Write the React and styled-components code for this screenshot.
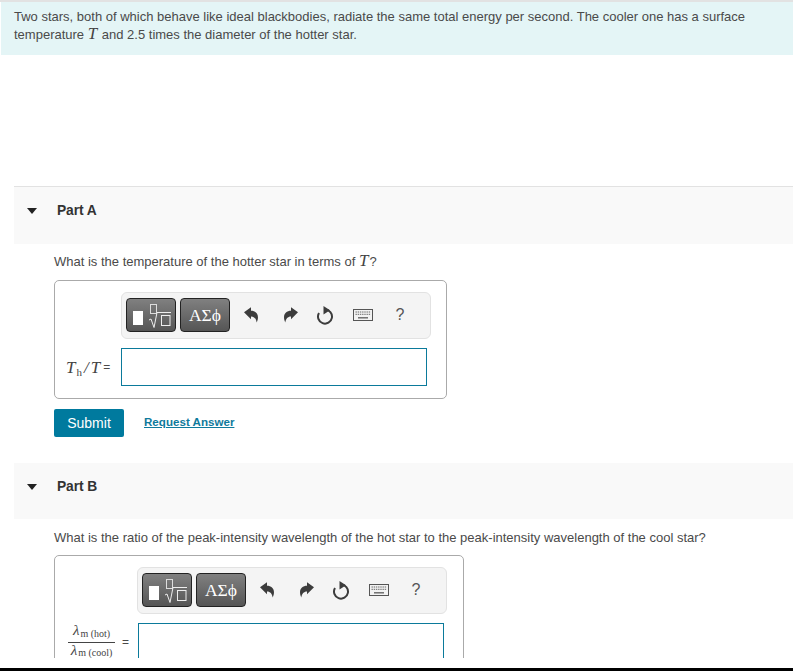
import React from "react";
import styled, { createGlobalStyle } from "styled-components";

const GlobalStyle = createGlobalStyle`
  html, body {
    margin: 0;
    padding: 0;
    background: #fff;
  }
  body {
    font-family: "Liberation Sans", Arial, sans-serif;
    color: #4a4a4a;
  }
`;

const Page = styled.div`
  width: 793px;
  height: 671px;
  display: flex;
  flex-direction: column;
  overflow: hidden;
`;

const Content = styled.div`
  height: 658px;
  flex: none;
  overflow: hidden;
  border-top: 2px solid #e2e2e2;
  box-sizing: border-box;
`;

const BottomBar = styled.div`
  margin-top: auto;
  height: 3px;
  background: #000;
`;

const Intro = styled.div`
  margin-left: 1px;
  height: 53px;
  box-sizing: border-box;
  padding: 7px 13px;
  background: #e4f5f6;
  font-size: 13px;
  line-height: 16px;
  margin-bottom: 131px;
`;

const MathText = styled.span`
  font-family: "Liberation Serif", "Times New Roman", serif;
  font-style: italic;
  font-size: ${(p) => p.$size || "17px"};
  line-height: 1;
  margin-right: ${(p) => p.$after || "1px"};
  color: #444;
`;

const Sub = styled.span`
  font-family: "Liberation Serif", "Times New Roman", serif;
  font-size: ${(p) => p.$size || "11px"};
  font-style: normal;
  margin-left: 1px;
  position: relative;
  top: ${(p) => p.$drop || "3px"};
`;

const Slash = styled.span`
  margin: 0 2px;
`;

const Part = styled.section`
  margin-left: 14px;
  margin-top: ${(p) => p.$top || "0"};
`;

const PartHeader = styled.div`
  height: ${(p) => p.$height};
  box-sizing: border-box;
  padding: ${(p) => p.$pad} 0 0 13px;
  background: #f9f9f9;
  border-top: ${(p) => (p.$line ? "1px solid #e2e2e2" : "none")};
  display: flex;
  align-items: flex-start;
`;

const Caret = styled.span`
  width: 0;
  height: 0;
  margin-top: 6px;
  border-left: 5.5px solid transparent;
  border-right: 5.5px solid transparent;
  border-top: 6px solid #222;
`;

const PartTitle = styled.h3`
  margin: 0 0 0 19px;
  padding-left: 1px;
  font-size: 13.8px;
  letter-spacing: -0.1px;
  line-height: 17px;
  font-weight: bold;
  color: #333;
`;

const PartBody = styled.div`
  padding: ${(p) => p.$top} 0 0 40px;
`;

const Question = styled.p`
  margin: 0 0 ${(p) => p.$gap};
  font-size: 13px;
  line-height: 18px;
`;

const AnswerBox = styled.div`
  width: ${(p) => p.$width};
  box-sizing: border-box;
  padding: 11px 0 12px 11px;
  border: 1px solid #aaa;
  border-radius: 5px;
`;

const Toolbar = styled.div`
  width: 310px;
  height: 47px;
  box-sizing: border-box;
  margin-left: ${(p) => p.$inset};
  padding: 5px 4px;
  display: flex;
  align-items: flex-start;
  background: #f4f4f4;
  border: 1px solid #e2e2e2;
  border-radius: 6px;
`;

const ToolButton = styled.button`
  width: 50px;
  height: 34px;
  margin-right: 4px;
  padding: 0;
  flex: none;
  display: flex;
  align-items: center;
  justify-content: center;
  background: linear-gradient(#808080, #555);
  border: 1px solid #222;
  border-radius: 4px;
  color: #fff;
  font-family: "Liberation Serif", "Times New Roman", serif;
  font-size: 17.5px;
`;

const IconSlot = styled.span`
  width: ${(p) => p.$width};
  height: 34px;
  flex: none;
  display: flex;
  align-items: center;
  justify-content: center;
  color: #3c3c3c;
`;

const Help = styled.span`
  font-size: 16px;
  color: #555;
`;

const AnswerRow = styled.div`
  display: flex;
  align-items: flex-start;
  margin-top: 9px;
`;

const Label = styled.div`
  width: ${(p) => p.$width};
  height: 38px;
  flex: none;
  display: flex;
  align-items: center;
  font-size: 12px;
  white-space: nowrap;
`;

const Equals = styled.span`
  margin-left: ${(p) => p.$gap || "3px"};
  font-size: 12px;
`;

const AnswerInput = styled.input`
  width: 306px;
  height: 38px;
  flex: none;
  box-sizing: border-box;
  border: 1px solid #0b7a9b;
  border-radius: 0;
  background: #fff;
  outline: none;
`;

const Fraction = styled.span`
  display: inline-flex;
  flex-direction: column;
  align-items: center;
  width: 47px;
  margin: 0 0 2px 2px;
`;

const FractionLine = styled.span`
  align-self: stretch;
  height: 1px;
  margin-top: 3px;
  background: #444;
`;

const FractionPart = styled.span`
  height: 16px;
  line-height: 16px;
  white-space: nowrap;
`;

const Actions = styled.div`
  display: flex;
  align-items: center;
  margin-top: 10px;
`;

const Submit = styled.button`
  width: 70px;
  height: 28px;
  padding: 0;
  background: #007a9e;
  border: none;
  border-radius: 2px;
  color: #fff;
  font-family: inherit;
  font-size: 14px;
`;

const RequestLink = styled.a`
  margin: -4px 0 0 20px;
  color: #0f7a9c;
  font-size: 11.6px;
  font-weight: bold;
  text-decoration: underline;
`;

const FlipSvg = styled.svg`
  transform: ${(p) => (p.$flip ? "scaleX(-1)" : "none")};
`;

function UndoIcon({ flip }) {
  return (
    <FlipSvg $flip={flip} width="15" height="16" viewBox="0 0 15 16">
      <path d="M0 5.300 7 .3v3.400c5.500 0 9 4.500 5.700 11.800-.6-3.800-2.400-6-5.700-6v2.800z" fill="currentColor" />
    </FlipSvg>
  );
}

function ResetIcon() {
  return (
    <svg width="18" height="20" viewBox="0 0 18 20">
      <path d="M9 4.600A7 7 0 1 1 3 8" fill="none" stroke="currentColor" strokeWidth="2" />
      <path d="M7.500 1V9.500L14 5.200z" fill="currentColor" />
    </svg>
  );
}

function KeyboardIcon() {
  return (
    <svg width="20" height="12" viewBox="0 0 20 12">
      <rect x=".5" y=".5" width="19" height="11" fill="#f2f2f2" stroke="#555" />
      <path d="M2.500 3h15M2.500 5.300h15" stroke="#666" strokeDasharray="1.400 .8" fill="none" />
      <path d="M5 8.800h10" stroke="#666" strokeWidth="1.400" />
    </svg>
  );
}

function TemplateIcon() {
  return (
    <svg width="42" height="28" viewBox="0 0 42 28" fill="none">
      <rect x="3" y="10" width="10" height="14" fill="#fff" />
      <rect x="20.500" y="3.500" width="6" height="9" stroke="#ddd" />
      <path d="M19 19l2-1 3 8.500L27 11.500H41" stroke="#eee" />
      <rect x="31.500" y="14.500" width="8.500" height="10" stroke="#eee" />
    </svg>
  );
}

function MathToolbar({ inset }) {
  return (
    <Toolbar $inset={inset}>
      <ToolButton>
        <TemplateIcon />
      </ToolButton>
      <ToolButton>ΑΣϕ</ToolButton>
      <IconSlot $width="34px"><UndoIcon /></IconSlot>
      <IconSlot $width="44px"><UndoIcon flip /></IconSlot>
      <IconSlot $width="26px"><ResetIcon /></IconSlot>
      <IconSlot $width="50px"><KeyboardIcon /></IconSlot>
      <IconSlot $width="24px"><Help>?</Help></IconSlot>
    </Toolbar>
  );
}

function App() {
  return (
    <Page>
      <GlobalStyle />
      <Content>
        <Intro>
          Two stars, both of which behave like ideal blackbodies, radiate the same total energy per second. The cooler one has a surface
          <br />
          temperature <MathText>T</MathText> and 2.5 times the diameter of the hotter star.
        </Intro>

        <Part>
          <PartHeader $height="58px" $pad="15px" $line>
            <Caret />
            <PartTitle>Part A</PartTitle>
          </PartHeader>
          <PartBody $top="8px">
            <Question $gap="9px">
              What is the temperature of the hotter star in terms of <MathText>T</MathText>?
            </Question>
            <AnswerBox $width="393px">
              <MathToolbar inset="55px" />
              <AnswerRow>
                <Label $width="55px">
                  <MathText $after="0">T<Sub>h</Sub><Slash>/</Slash>T</MathText>
                  <Equals>=</Equals>
                </Label>
                <AnswerInput />
              </AnswerRow>
            </AnswerBox>
            <Actions>
              <Submit>Submit</Submit>
              <RequestLink>Request Answer</RequestLink>
            </Actions>
          </PartBody>
        </Part>

        <Part $top="26px">
          <PartHeader $height="56px" $pad="15px">
            <Caret />
            <PartTitle>Part B</PartTitle>
          </PartHeader>
          <PartBody $top="10px">
            <Question $gap="8px">
              What is the ratio of the peak-intensity wavelength of the hot star to the peak-intensity wavelength of the cool star?
            </Question>
            <AnswerBox $width="410px">
              <MathToolbar inset="71px" />
              <AnswerRow>
                <Label $width="72px">
                  <Fraction>
                    <FractionPart><MathText $size="15px" $after="0">λ<Sub $size="10px" $drop="2px">m (hot)</Sub></MathText></FractionPart>
                    <FractionLine />
                    <FractionPart><MathText $size="15px" $after="0">λ<Sub $size="10px" $drop="1px">m (cool)</Sub></MathText></FractionPart>
                  </Fraction>
                  <Equals $gap="7px">=</Equals>
                </Label>
                <AnswerInput />
              </AnswerRow>
            </AnswerBox>
          </PartBody>
        </Part>
      </Content>
      <BottomBar />
    </Page>
  );
}

export default App;
